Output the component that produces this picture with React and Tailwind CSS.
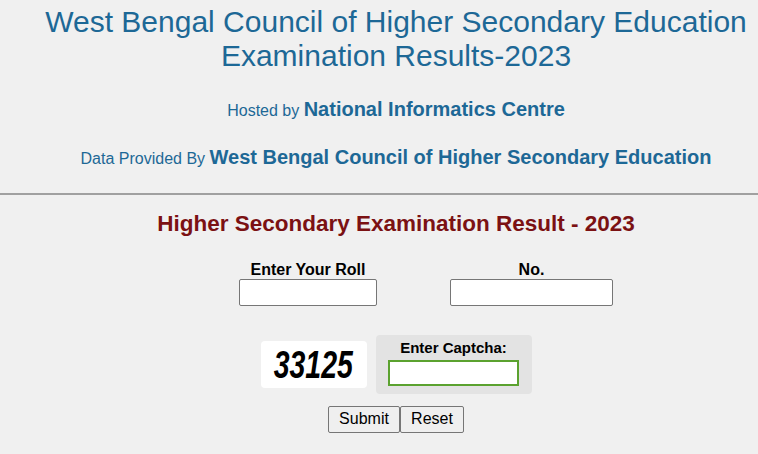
import { useState } from 'react';

export default function App() {
  const [roll, setRoll] = useState('');
  const [no, setNo] = useState('');
  const [captcha, setCaptcha] = useState('');

  const reset = () => {
    setRoll('');
    setNo('');
    setCaptcha('');
  };

  return (
    <div className="min-h-[454px] bg-[#f0f0f0] font-['Liberation_Sans',Arial,sans-serif] text-black">
      {/* Header */}
      <div className="pl-[34px] pt-[5px] text-center text-[#1d6896]">
        <h1 className="text-[30px] leading-[34px] font-normal">
          West Bengal Council of Higher Secondary Education
          <br />
          Examination Results-2023
        </h1>
        <p className="mt-[21px] text-[16px]">
          Hosted by <span className="text-[20px] font-bold">National Informatics Centre</span>
        </p>
        <p className="mt-[18px] text-[16px]">
          Data Provided By <span className="text-[20px] font-bold">West Bengal Council of Higher Secondary Education</span>
        </p>
      </div>

      <hr className="mt-[21px] border-0 border-t-2 border-[#a0a0a0]" />

      {/* Form */}
      <div className="pl-[34px] text-center">
        <h2 className="mt-[12px] text-[22.5px] font-bold text-[#7b1113]">
          Higher Secondary Examination Result - 2023
        </h2>

        <div className="ml-[60px] mt-[20px] flex justify-center gap-[73px]">
          <label className="flex w-[138px] flex-col items-center">
            <span className="text-[16px] font-bold leading-[18px]">Enter Your Roll</span>
            <input
              value={roll}
              onChange={(e) => setRoll(e.target.value)}
              className="h-[27px] w-[138px] rounded-[2px] border border-[#767676] bg-white px-1 outline-none"
            />
          </label>
          <label className="flex w-[163px] flex-col items-center">
            <span className="text-[16px] font-bold leading-[18px]">No.</span>
            <input
              value={no}
              onChange={(e) => setNo(e.target.value)}
              className="h-[27px] w-[163px] rounded-[2px] border border-[#767676] bg-white px-1 outline-none"
            />
          </label>
        </div>

        <div className="mt-[29px] flex items-center justify-center gap-[9px]">
          <div className="flex h-[47px] w-[106px] items-center justify-center rounded-[4px] bg-white">
            <span className="inline-block scale-x-[0.73] font-['Liberation_Sans',Arial,sans-serif] text-[39px] leading-none font-bold italic">
              33125
            </span>
          </div>
          <div className="flex h-[59px] w-[156px] flex-col items-center rounded-[4px] bg-[#e3e3e3] pt-[4px]">
            <span className="text-[15px] font-bold leading-[18px]">Enter Captcha:</span>
            <input
              value={captcha}
              onChange={(e) => setCaptcha(e.target.value)}
              className="mt-[3px] h-[26px] w-[131px] border-2 border-[#5ba22f] bg-white px-1 outline-none"
            />
          </div>
        </div>

        <div className="mt-[12px] flex justify-center">
          <button className="h-[27px] w-[72px] rounded-[2px] border border-[#767676] bg-[#efefef] text-[16px]">
            Submit
          </button>
          <button
            onClick={reset}
            className="h-[27px] w-[64px] rounded-[2px] border border-[#767676] bg-[#efefef] text-[16px]"
          >
            Reset
          </button>
        </div>
      </div>
    </div>
  );
}
